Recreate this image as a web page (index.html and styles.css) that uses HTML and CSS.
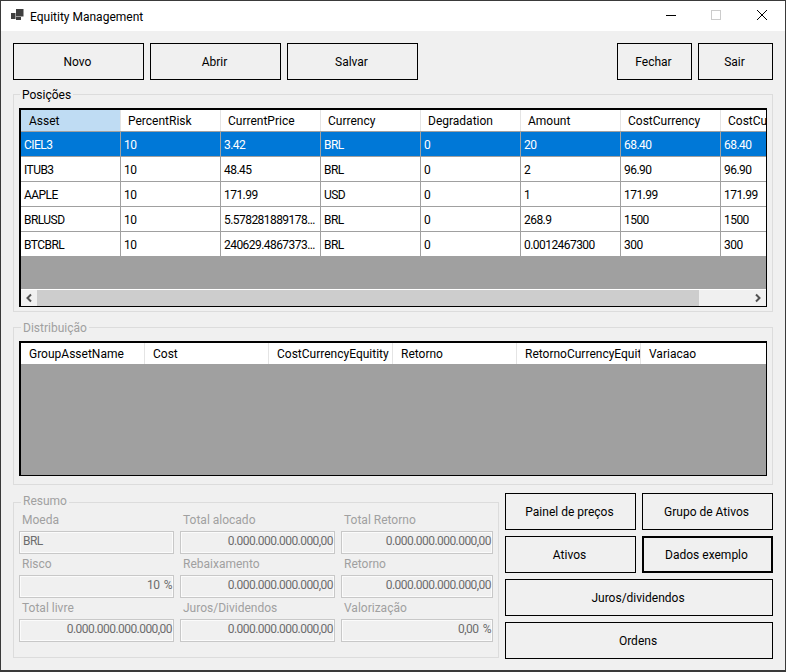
FILE: index.html
```html
<!DOCTYPE html>
<html lang="pt">
<head>
<meta charset="utf-8">
<title>Equitity Management</title>
<link rel="stylesheet" href="styles.css">
</head>
<body>
<div class="window">
  <header class="titlebar">
    <svg class="app-icon" width="16" height="16" viewBox="0 0 16 16"><rect x="1" y="5" width="4.5" height="6" fill="#404040"/><rect x="6" y="1" width="7.5" height="7.5" fill="#404040"/><rect x="6" y="9" width="5" height="3" fill="#404040"/></svg>
    <span class="title">Equitity Management</span>
    <div class="caption">
      <svg class="cap" width="46" height="30" viewBox="0 0 46 30"><path d="M19 14.5h10" stroke="#000" fill="none"/></svg>
      <svg class="cap" width="46" height="30" viewBox="0 0 46 30"><rect x="18.5" y="9.5" width="9" height="9" stroke="#ccc" fill="none"/></svg>
      <svg class="cap" width="46" height="30" viewBox="0 0 46 30"><path d="M18 9l10 10M28 9l-10 10" stroke="#000" fill="none"/></svg>
    </div>
  </header>
  <main class="content">
    <div class="toolbar">
      <button class="btn w131">Novo</button>
      <button class="btn w131">Abrir</button>
      <button class="btn w131">Salvar</button>
      <span class="spacer"></span>
      <button class="btn w75">Fechar</button>
      <button class="btn w75">Sair</button>
    </div>
    <section class="group group-pos">
      <span class="legend">Posições</span>
      <div class="grid grid-pos">
        <div class="row head pos-head">
          <div class="cell current">Asset</div><div class="cell">PercentRisk</div><div class="cell">CurrentPrice</div><div class="cell">Currency</div><div class="cell">Degradation</div><div class="cell">Amount</div><div class="cell">CostCurrency</div><div class="cell">CostCurrencyEquity</div>
        </div>
        <div class="row data selected">
          <div class="cell">CIEL3</div><div class="cell">10</div><div class="cell">3.42</div><div class="cell">BRL</div><div class="cell">0</div><div class="cell">20</div><div class="cell">68.40</div><div class="cell">68.40</div>
        </div>
        <div class="row data">
          <div class="cell">ITUB3</div><div class="cell">10</div><div class="cell">48.45</div><div class="cell">BRL</div><div class="cell">0</div><div class="cell">2</div><div class="cell">96.90</div><div class="cell">96.90</div>
        </div>
        <div class="row data">
          <div class="cell">AAPLE</div><div class="cell">10</div><div class="cell">171.99</div><div class="cell">USD</div><div class="cell">0</div><div class="cell">1</div><div class="cell">171.99</div><div class="cell">171.99</div>
        </div>
        <div class="row data">
          <div class="cell">BRLUSD</div><div class="cell">10</div><div class="cell">5.578281889178...</div><div class="cell">BRL</div><div class="cell">0</div><div class="cell">268.9</div><div class="cell">1500</div><div class="cell">1500</div>
        </div>
        <div class="row data">
          <div class="cell">BTCBRL</div><div class="cell">10</div><div class="cell">240629.4867373...</div><div class="cell">BRL</div><div class="cell">0</div><div class="cell">0.0012467300</div><div class="cell">300</div><div class="cell">300</div>
        </div>
        <div class="empty"></div>
        <div class="hscroll">
          <svg class="arrow" width="16" height="16" viewBox="0 0 16 16"><path d="M10 4.5L6.5 8l3.5 3.5" stroke="#505050" stroke-width="2" fill="none"/></svg>
          <div class="thumb"></div>
          <div class="track"></div>
          <svg class="arrow" width="16" height="16" viewBox="0 0 16 16"><path d="M6 4.5L9.5 8 6 11.5" stroke="#505050" stroke-width="2" fill="none"/></svg>
        </div>
      </div>
    </section>
    <section class="group group-dist disabled">
      <span class="legend">Distribuição</span>
      <div class="grid grid-dist">
        <div class="row head dist-head">
          <div class="cell">GroupAssetName</div><div class="cell">Cost</div><div class="cell">CostCurrencyEquitity</div><div class="cell">Retorno</div><div class="cell">RetornoCurrencyEquitity</div><div class="cell">Variacao</div>
        </div>
        <div class="empty"></div>
      </div>
    </section>
    <div class="bottom">
      <section class="group group-res disabled">
        <span class="legend">Resumo</span>
        <div class="fields">
          <div class="field"><label>Moeda</label><div class="input left">BRL</div></div>
          <div class="field"><label>Total alocado</label><div class="input">0.000.000.000.000,00</div></div>
          <div class="field"><label>Total Retorno</label><div class="input">0.000.000.000.000,00</div></div>
          <div class="field"><label>Risco</label><div class="input">10 %</div></div>
          <div class="field"><label>Rebaixamento</label><div class="input">0.000.000.000.000,00</div></div>
          <div class="field"><label>Retorno</label><div class="input">0.000.000.000.000,00</div></div>
          <div class="field"><label>Total livre</label><div class="input">0.000.000.000.000,00</div></div>
          <div class="field"><label>Juros/Dividendos</label><div class="input">0.000.000.000.000,00</div></div>
          <div class="field"><label>Valorização</label><div class="input">0,00 %</div></div>
        </div>
      </section>
      <div class="actions">
        <button class="btn">Painel de preços</button>
        <button class="btn">Grupo de Ativos</button>
        <button class="btn">Ativos</button>
        <button class="btn default">Dados exemplo</button>
        <button class="btn wide">Juros/dividendos</button>
        <button class="btn wide">Ordens</button>
      </div>
    </div>
  </main>
</div>
</body>
</html>
```
FILE: styles.css
```css
* { box-sizing: border-box; }
html, body { margin: 0; height: 100%; }
body { font-family: Roboto, "Open Sans", sans-serif; font-size: 12px; color: #000; overflow: hidden; }
.window { width: 786px; height: 672px; border: 1px solid #3a3a3a; border-bottom-width: 2px; background: #f0f0f0; display: flex; flex-direction: column; }
.titlebar { height: 30px; background: #fff; display: flex; align-items: center; padding-left: 9px; flex: none; }
.app-icon { flex: none; }
.title { margin-left: 4px; padding-top: 2px; }
.caption { margin-left: auto; display: flex; }
.content { flex: 1; padding: 12px 12px 0; display: flex; flex-direction: column; }
.btn { height: 37px; border: 1px solid #000; background: #f0f0f0; font: inherit; color: #000; padding: 0 2px 0 0; border-radius: 0; }
.toolbar { display: flex; gap: 6px; flex: none; }
.w131 { width: 131px; }
.w75 { width: 75px; }
.spacer { flex: 1; }
.group { position: relative; border: 1px solid #dcdcdc; padding: 0 5px; flex: none; }
.legend { position: absolute; left: 6px; top: -8px; padding: 0 2px; background: #f0f0f0; line-height: 16px; }
.group-dist .legend { left: 7px; }
.group-res .legend { left: 7px; top: -10px; }
.disabled .legend, .disabled label { color: #a0a0a0; }
.group-pos { margin-top: 14px; height: 218px; padding-top: 13px; }
.group-dist { margin-top: 15px; height: 158px; padding-top: 13px; }
.grid { border: 2px solid #000; border-right-width: 1px; border-bottom-width: 1px; background: #a0a0a0; display: flex; flex-direction: column; overflow: hidden; }
.grid-pos { height: 199px; }
.grid-dist { height: 135px; }
.row { display: flex; flex: none; background: #fff; }
.cell { flex: none; width: 100px; white-space: nowrap; overflow: hidden; }
.head { height: 21px; line-height: 22px; }
.head .cell { padding-left: 8px; border-right: 1px solid #e4e4e4; }
.pos-head .cell { padding-left: 7px; }
.pos-head .current { padding-left: 8px; background: #bfdcf3; }
.data { height: 25px; border-top: 1px solid #a0a0a0; line-height: 26px; letter-spacing: -0.55px; }
.data .cell { padding-left: 3px; border-right: 1px solid #a0a0a0; }
.selected { background: #0078d7; color: #fff; }
.empty { flex: 1; }
.hscroll { flex: none; height: 17px; border-top: 1px solid #fff; background: #f0f0f0; display: flex; align-items: center; }
.arrow { flex: none; }
.thumb { width: 662px; height: 16px; background: #cdcdcd; }
.track { flex: 1; }
.dist-head .cell { width: 124px; }
.dist-head .cell:last-child { width: 140px; border-right: 0; }
.bottom { display: flex; gap: 6px; flex: none; margin-top: 8px; align-items: flex-start; }
.group-res { margin-top: 9px; width: 486px; height: 156px; padding: 10px 5px 0; }
.fields { display: grid; grid-template-columns: 155px 155px 152px; column-gap: 6px; row-gap: 0; }
.field { height: 44px; display: flex; flex-direction: column; }
.field label { height: 18px; line-height: 14px; padding-left: 3px; flex: none; }
.input { height: 23px; border: 1px solid #c8c8c8; box-shadow: inset 0 0 0 1px #fbfbfb; line-height: 19px; text-align: right; padding: 0 1px; color: #6d6d6d; white-space: nowrap; overflow: hidden; letter-spacing: -0.55px; word-spacing: 2px; }
.input.left { text-align: left; padding-left: 3px; }
.actions { display: grid; grid-template-columns: 131px 131px; gap: 6px; flex: none; }
.wide { grid-column: span 2; }
.default { border-width: 2px; }
```
